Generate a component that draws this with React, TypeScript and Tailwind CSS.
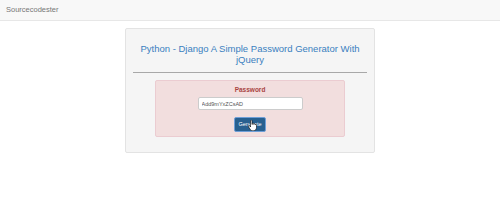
export default function App() {
  return (
    <div className="w-[500px] h-[213px] bg-white font-['Liberation_Sans',Arial,sans-serif]">
      <nav className="h-[21px] bg-[#f8f8f8] border-b border-[#e7e7e7] flex items-center px-[6px]">
        <span className="text-[7.5px] text-[#777]">Sourcecodester</span>
      </nav>
      <main className="flex justify-center pt-[7px]">
        <div className="w-[250px] bg-[#f5f5f5] border border-[#e3e3e3] rounded-[2px] px-[7px] pt-[14px] pb-[15px]">
          <h3 className="text-center text-[9.5px] leading-[11px] text-[#3a7fc0]">
            Python - Django A Simple Password Generator With jQuery
          </h3>
          <hr className="mt-[7px] border-t border-[#a8a8a8]" />
          <div className="mt-[7px] mx-[22px] bg-[#f2dede] border border-[#ebccd1] rounded-[2px] pt-[5px] pb-[4px] flex flex-col items-center leading-none">
            <label className="text-[6.5px] leading-[8px] font-bold text-[#a94442]">Password</label>
            <input
              readOnly
              value="Add9mYxZCsAD"
              className="mt-[3px] w-[105px] h-[13px] bg-white border border-[#ccc] rounded-[2px] px-[3px] text-[5.5px] text-[#555] outline-none"
            />
            <div className="relative mt-[7px] flex">
              <button className="w-[32px] h-[15px] bg-[#286090] border border-[#6f9fd8] rounded-[2px] text-[5.5px] leading-none text-white">
                Generate
              </button>
              <svg
                className="absolute left-[14px] top-[3px]"
                width="9"
                height="11"
                viewBox="0 0 18 22"
              >
                <path
                  d="M5 1.5c0-.8.6-1.5 1.5-1.5S8 .7 8 1.5V9l.5-.2V7.5C8.5 6.7 9.1 6 10 6s1.5.7 1.5 1.5v1.3c.2-.7.8-1.3 1.5-1.3.8 0 1.5.7 1.5 1.5v1c.2-.5.7-1 1.3-1 .8 0 1.2.7 1.2 1.5V15c0 3.5-2.3 6.5-6 6.5H9c-2 0-3.5-1-4.5-2.5L1 13.5c-.5-.8-.3-1.8.4-2.2.7-.4 1.6-.2 2.1.5L5 14V1.5z"
                  fill="#fff"
                  stroke="#000"
                  strokeWidth="1.2"
                />
              </svg>
            </div>
          </div>
        </div>
      </main>
    </div>
  );
}
